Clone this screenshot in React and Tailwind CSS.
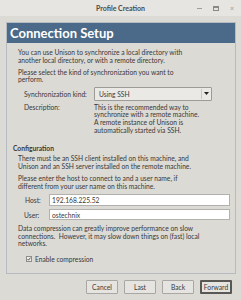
import React from "react";

const L = ({ children, cls = "" }) => (
  <div className={"whitespace-nowrap h-[7.6px] leading-[7.6px] " + cls}>{children}</div>
);

function Btn({ children, def }) {
  return (
    <div
      className={
        "w-[32px] h-[14px] flex items-center justify-center rounded-[1px] bg-[#e6e4e0] text-[#3a3a3a] " +
        (def ? "border-2 border-[#5a5854]" : "border border-[#a9a7a3]")
      }
    >
      {children}
    </div>
  );
}

export default function App() {
  return (
    <div
      className="w-[241px] h-[300px] bg-[#dcdad5] flex flex-col text-[6.7px] text-[#383838] overflow-hidden"
      style={{ fontFamily: "Lato, 'Open Sans', sans-serif" }}
    >
      {/* title bar */}
      <div className="h-[16px] bg-[#e7e5e1] grid grid-cols-[1fr_auto_1fr] items-center">
        <div />
        <div className="font-bold text-[7px] text-[#4b4b4b]">Profile Creation</div>
        <div className="flex justify-end items-center gap-[11px] pr-[7px] text-[#9a9894]">
          <div className="w-[5px] h-[1px] bg-[#a09e9a]" />
          <div className="w-[6px] h-[5px] border border-[#8a8884] border-t-2" />
          <div className="text-[7px] leading-none">×</div>
        </div>
      </div>

      {/* panel */}
      <div className="mt-[6px] ml-[6px] mr-[5px] h-[252px] border border-[#b6bbc2] flex flex-col">
        <div className="h-[20px] bg-[#4b6a8a] flex items-center pl-[3px] text-white font-bold text-[13px] leading-none">
          Connection Setup
        </div>
        <div className="pl-[11px] pt-[6px]">
          <L>You can use Unison to synchronize a local directory with</L>
          <L>another local directory, or with a remote directory.</L>
          <div className="h-[4.5px]" />
          <L>Please select the kind of synchronization you want to</L>
          <L>perform.</L>
          <div className="h-[3px]" />
          <div className="flex items-center h-[14px]">
            <div className="w-[76px] pl-[6px]">Synchronization kind:</div>
            <div className="w-[118px] h-[14px] bg-[#ebe9e5] border border-[#9d9b97] rounded-[1px] flex items-center">
              <div className="flex-1 pl-[4px]">Using SSH</div>
              <div className="w-[1px] h-[10px] bg-[#c9c7c3]" />
              <div className="w-[9px] flex justify-center">
                <svg width="5" height="3" viewBox="0 0 5 3">
                  <path d="M0 0H5L2.5 3Z" fill="#222" />
                </svg>
              </div>
            </div>
          </div>
          <div className="flex pt-[3px]">
            <div className="w-[76px] pl-[6px] pt-[0px]">
              <L>Description:</L>
            </div>
            <div>
              <L>This is the recommended way to</L>
              <L>synchronize with a remote machine.</L>
              <L>A remote instance of Unison is</L>
              <L>automatically started via SSH.</L>
            </div>
          </div>
        </div>
        <div className="pl-[6px] pt-[11px]">
          <L cls="font-bold">Configuration</L>
        </div>
        <div className="pl-[11px] pt-[2.5px]">
          <L>There must be an SSH client installed on this machine, and</L>
          <L>Unison and an SSH server installed on the remote machine.</L>
          <div className="h-[4.5px]" />
          <L>Please enter the host to connect to and a user name, if</L>
          <L>different from your user name on this machine.</L>
          <div className="h-[4px]" />
          <div className="flex items-center h-[12px] pl-[7px]">
            <div className="w-[24px]">Host:</div>
            <div className="w-[181px] h-[12px] bg-white border border-[#b3b1ad] flex items-center pl-[2px]">
              192.168.225.52
            </div>
          </div>
          <div className="h-[3px]" />
          <div className="flex items-center h-[11px] pl-[6px]">
            <div className="w-[25px]">User:</div>
            <div className="w-[181px] h-[11px] bg-white border border-[#b3b1ad] flex items-center pl-[2px]">
              ostechnix
            </div>
          </div>
          <div className="h-[5px]" />
          <L>Data compression can greatly improve performance on slow</L>
          <L>connections.&nbsp; However, it may slow down things on (fast) local</L>
          <L>networks.</L>
          <div className="h-[6px]" />
          <div className="flex items-center pl-[8px] gap-[3px]">
            <div className="w-[6px] h-[6px] border border-[#8f8d89] bg-[#efeeec] flex items-center justify-center">
              <svg width="4" height="4" viewBox="0 0 4 4">
                <path d="M0.5 2L1.6 3.2L3.5 0.6" stroke="#333" strokeWidth="0.8" fill="none" />
              </svg>
            </div>
            <div>Enable compression</div>
          </div>
        </div>
      </div>

      {/* buttons */}
      <div className="mt-[6px] flex justify-end gap-[6px] pr-[9px]">
        <Btn>Cancel</Btn>
        <Btn>Last</Btn>
        <Btn>Back</Btn>
        <Btn def>Forward</Btn>
      </div>
    </div>
  );
}
